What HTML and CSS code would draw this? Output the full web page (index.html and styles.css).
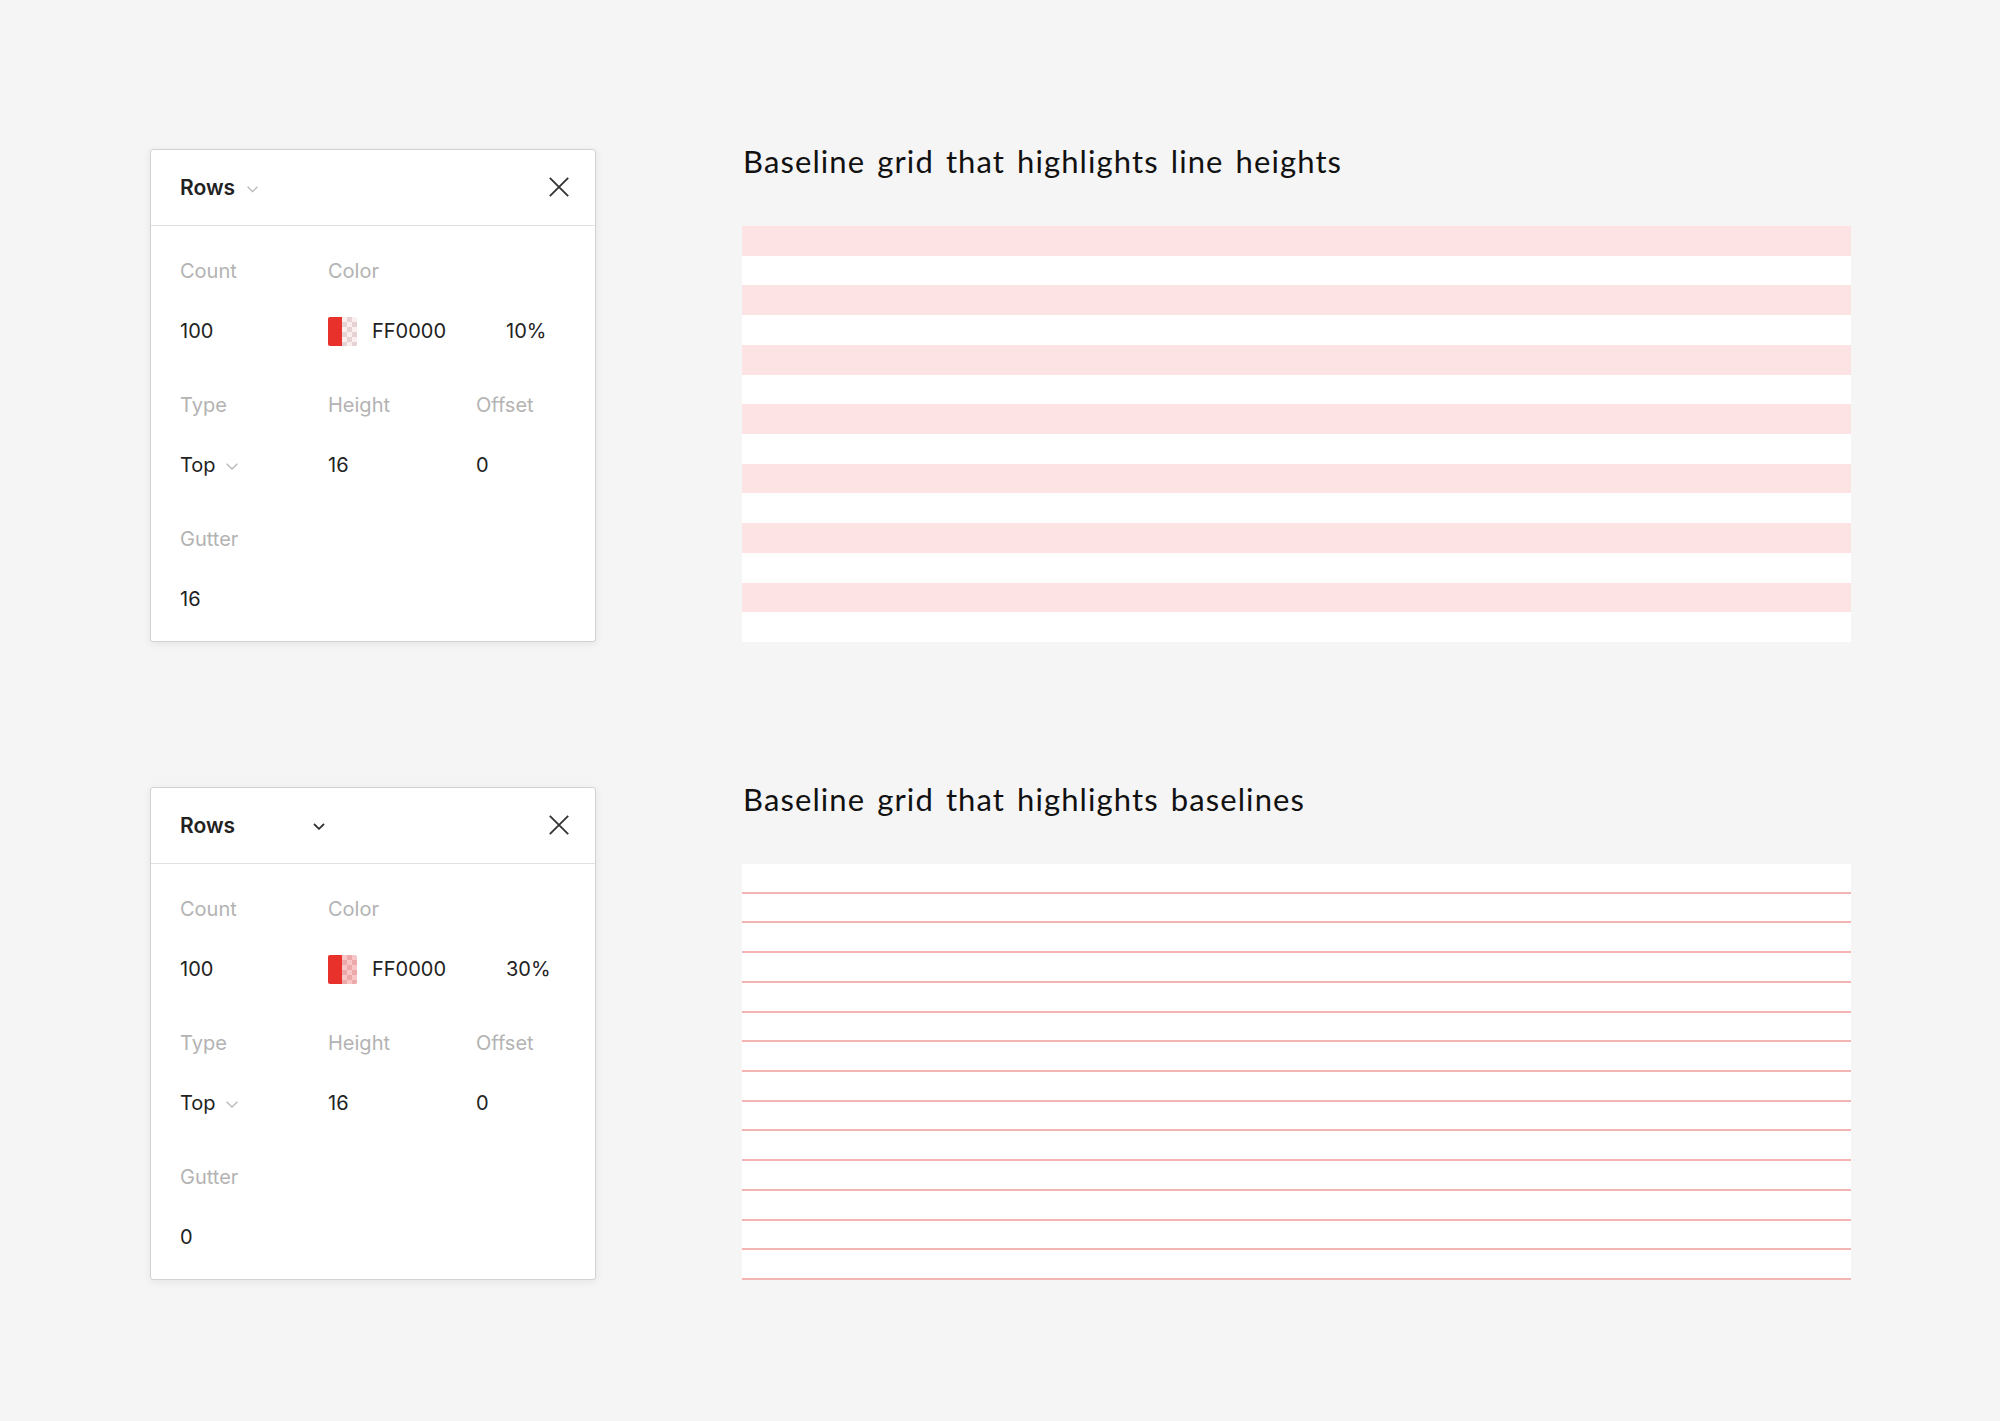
FILE: index.html
```html
<!DOCTYPE html>
<html lang="en">
<head>
<meta charset="utf-8">
<title>Baseline grids</title>
<link rel="stylesheet" href="styles.css">
</head>
<body>
<main class="page">
  <section class="example">
    <div class="panel">
      <header class="panel-head">
        <div class="select select-inline">
          <span class="select-label">Rows</span>
          <svg class="chev-light" width="11" height="7" viewBox="0 0 11 7"><polyline points="0.6,0.8 5.5,5.7 10.4,0.8" fill="none" stroke="#b8b8b8" stroke-width="1.3"/></svg>
        </div>
        <svg class="close" width="20" height="20" viewBox="0 0 20 20"><path d="M0.8 0.8 L19.2 19.2 M19.2 0.8 L0.8 19.2" stroke="#333" stroke-width="1.8" fill="none"/></svg>
      </header>
      <div class="panel-body">
        <div class="group">
          <span class="label">Count</span>
          <span class="label span2">Color</span>
          <span class="value">100</span>
          <div class="value span2 color-row">
            <span class="swatch swatch-10"><span class="swatch-solid"></span><span class="swatch-alpha"></span></span>
            <span class="hex">FF0000</span>
            <span class="pct">10%</span>
          </div>
        </div>
        <div class="group">
          <span class="label">Type</span>
          <span class="label">Height</span>
          <span class="label">Offset</span>
          <div class="value type-row">Top
            <svg class="chev-light" width="12" height="7" viewBox="0 0 12 7"><polyline points="0.6,0.8 6,6 11.4,0.8" fill="none" stroke="#b8b8b8" stroke-width="1.3"/></svg>
          </div>
          <span class="value">16</span>
          <span class="value">0</span>
        </div>
        <div class="group">
          <span class="label">Gutter</span>
          <span class="label span2"></span>
          <span class="value">16</span>
        </div>
      </div>
    </div>
    <div class="demo">
      <h2 class="demo-title">Baseline grid that highlights line heights</h2>
      <div class="grid grid-stripes">
        <div class="row"></div><div class="row"></div><div class="row"></div><div class="row"></div>
        <div class="row"></div><div class="row"></div><div class="row"></div><div class="row"></div>
        <div class="row"></div><div class="row"></div><div class="row"></div><div class="row"></div>
        <div class="row"></div><div class="row"></div>
      </div>
    </div>
  </section>

  <section class="example">
    <div class="panel">
      <header class="panel-head">
        <div class="select select-fixed">
          <span class="select-label">Rows</span>
          <svg class="chev-dark" width="12" height="7" viewBox="0 0 12 7"><polyline points="1,1 6,5.8 11,1" fill="none" stroke="#333" stroke-width="1.8"/></svg>
        </div>
        <svg class="close" width="20" height="20" viewBox="0 0 20 20"><path d="M0.8 0.8 L19.2 19.2 M19.2 0.8 L0.8 19.2" stroke="#333" stroke-width="1.8" fill="none"/></svg>
      </header>
      <div class="panel-body">
        <div class="group">
          <span class="label">Count</span>
          <span class="label span2">Color</span>
          <span class="value">100</span>
          <div class="value span2 color-row">
            <span class="swatch swatch-30"><span class="swatch-solid"></span><span class="swatch-alpha"></span></span>
            <span class="hex">FF0000</span>
            <span class="pct">30%</span>
          </div>
        </div>
        <div class="group">
          <span class="label">Type</span>
          <span class="label">Height</span>
          <span class="label">Offset</span>
          <div class="value type-row">Top
            <svg class="chev-light" width="12" height="7" viewBox="0 0 12 7"><polyline points="0.6,0.8 6,6 11.4,0.8" fill="none" stroke="#b8b8b8" stroke-width="1.3"/></svg>
          </div>
          <span class="value">16</span>
          <span class="value">0</span>
        </div>
        <div class="group">
          <span class="label">Gutter</span>
          <span class="label span2"></span>
          <span class="value">0</span>
        </div>
      </div>
    </div>
    <div class="demo">
      <h2 class="demo-title">Baseline grid that highlights baselines</h2>
      <div class="grid grid-lines">
        <div class="row"></div><div class="row"></div><div class="row"></div><div class="row"></div>
        <div class="row"></div><div class="row"></div><div class="row"></div><div class="row"></div>
        <div class="row"></div><div class="row"></div><div class="row"></div><div class="row"></div>
        <div class="row"></div><div class="row"></div>
      </div>
    </div>
  </section>
</main>
</body>
</html>
```

FILE: styles.css
```css
html, body {
  margin: 0;
  padding: 0;
}

body {
  background: #f5f5f5;
  width: 2000px;
  height: 1421px;
  overflow: hidden;
  font-family: "Inter", "Liberation Sans", sans-serif;
  color: #222;
}

.page {
  padding: 149px 0 0 150px;
  display: flex;
  flex-direction: column;
  gap: 145px;
}

.example {
  display: flex;
  align-items: stretch;
  gap: 146px;
}

/* Panel */
.panel {
  width: 444px;
  background: #fff;
  border: 1px solid #d2d2d2;
  border-radius: 3px;
  box-shadow: 0 2px 8px rgba(0, 0, 0, 0.07);
  box-sizing: content-box;
}

.panel-head {
  height: 75px;
  border-bottom: 1px solid #e2e2e2;
  display: flex;
  align-items: center;
  justify-content: space-between;
  padding: 0 26px 0 29px;
}

.select {
  display: flex;
  align-items: center;
}

.select-inline {
  gap: 12px;
}

.select-fixed {
  width: 145px;
  justify-content: space-between;
}

.select-label {
  font-size: 21px;
  font-weight: 600;
  line-height: 26px;
  color: #222;
}

.chev-light {
  display: block;
  margin-top: 3px;
}

.chev-dark {
  display: block;
  margin-top: 1px;
}

.close {
  display: block;
  margin-top: -1px;
}

.panel-body {
  padding: 33px 30px 30px 29px;
  display: flex;
  flex-direction: column;
  gap: 50px;
}

.group {
  display: grid;
  grid-template-columns: 148px 148px 148px;
  grid-template-rows: 24px 24px;
  row-gap: 36px;
}

.span2 {
  grid-column: span 2;
}

.label {
  font-size: 20px;
  line-height: 24px;
  color: #b3b3b3;
}

.value {
  font-size: 20px;
  line-height: 24px;
  color: #222;
}

.color-row {
  display: flex;
  align-items: center;
}

.swatch {
  width: 29px;
  height: 29px;
  border-radius: 2px;
  overflow: hidden;
  display: flex;
  flex: none;
}

.swatch-solid {
  width: 14px;
  background: #e8312a;
}

.swatch-alpha {
  flex: 1;
  background-size: 10px 10px;
  background-position: 0 0;
}

.swatch-10 .swatch-alpha {
  background-color: #fbeeee;
  background-image: conic-gradient(#e6d2d2 0 25%, transparent 0 50%, #e6d2d2 0 75%, transparent 0);
}

.swatch-30 .swatch-alpha {
  background-color: #f8c6c6;
  background-image: conic-gradient(#eba9a9 0 25%, transparent 0 50%, #eba9a9 0 75%, transparent 0);
}

.hex {
  margin-left: 15px;
  width: 134px;
}

.type-row {
  display: flex;
  align-items: center;
  gap: 10px;
}

/* Demo column */
.demo {
  width: 1109px;
  display: flex;
  flex-direction: column;
  justify-content: space-between;
}

.demo-title {
  margin: 0;
  font-family: "Lato", "Liberation Sans", sans-serif;
  font-weight: 400;
  font-size: 31px;
  line-height: 24px;
  color: #111;
  letter-spacing: 1.1px;
  word-spacing: 3px;
  padding-left: 1px;
}

.grid {
  height: 416px;
  background: #fff;
  display: flex;
  flex-direction: column;
}

.grid .row {
  flex: 1;
}

.grid-stripes .row:nth-child(odd) {
  background: #fde3e3;
}

.grid-lines .row {
  border-bottom: 2px solid #f5b4b4;
}
```
